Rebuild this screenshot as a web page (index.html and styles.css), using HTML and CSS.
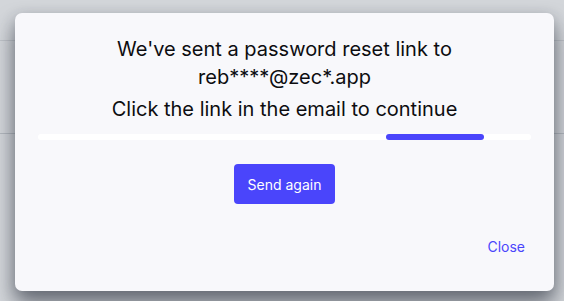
FILE: index.html
```html
<!DOCTYPE html>
<html lang="en">
<head>
<meta charset="utf-8">
<link rel="stylesheet" href="styles.css">
</head>
<body>
<div class="page">
  <div class="page-header"></div>
  <div class="page-section"></div>
</div>
<div class="modal">
  <p class="msg">We've sent a password reset link to<br>reb****@zec*.app</p>
  <p class="msg sub">Click the link in the email to continue</p>
  <div class="track"><div class="thumb"></div></div>
  <div class="actions"><button class="btn-primary">Send again</button></div>
  <div class="footer"><button class="btn-link">Close</button></div>
</div>
</body>
</html>
```
FILE: styles.css
```css
html, body {
  margin: 0;
  padding: 0;
}
body {
  width: 564px;
  height: 301px;
  overflow: hidden;
  position: relative;
  background: #d3d6da;
  font-family: Inter, "Noto Sans", sans-serif;
}
.page-header {
  height: 40px;
  border-bottom: 1px solid #bfc3c8;
}
.page-section {
  height: 92px;
  border-bottom: 1px solid #b3b8be;
}
.modal {
  position: absolute;
  left: 15px;
  top: 13px;
  width: 539px;
  height: 278px;
  box-sizing: border-box;
  background: #f8f8fb;
  border-radius: 7px;
  padding: 22px 23px 0;
  display: flex;
  flex-direction: column;
  box-shadow: 0 14px 22px rgba(40, 46, 58, 0.55), 0 4px 14px rgba(40, 46, 58, 0.25);
}
.msg {
  margin: 0;
  font-size: 20px;
  line-height: 28px;
  color: #0d0d10;
  text-align: center;
}
.sub {
  margin-top: 4px;
}
.track {
  margin-top: 11px;
  height: 6px;
  background: #ffffff;
  border-radius: 3px;
  position: relative;
}
.thumb {
  position: absolute;
  left: 348px;
  top: 0;
  width: 98px;
  height: 6px;
  border-radius: 3px;
  background: #4a45fb;
}
.actions {
  display: flex;
  justify-content: center;
  margin-top: 24px;
}
.btn-primary {
  height: 40px;
  padding: 0 14px;
  border: none;
  border-radius: 4px;
  background: #4a45fb;
  color: #ffffff;
  font-family: Inter, "Noto Sans", sans-serif;
  font-size: 14px;
}
.footer {
  display: flex;
  justify-content: flex-end;
  margin-top: 33px;
}
.btn-link {
  border: none;
  background: none;
  padding: 0 6px;
  height: 20px;
  line-height: 20px;
  color: #4a45fb;
  font-family: Inter, "Noto Sans", sans-serif;
  font-size: 14px;
}
```
